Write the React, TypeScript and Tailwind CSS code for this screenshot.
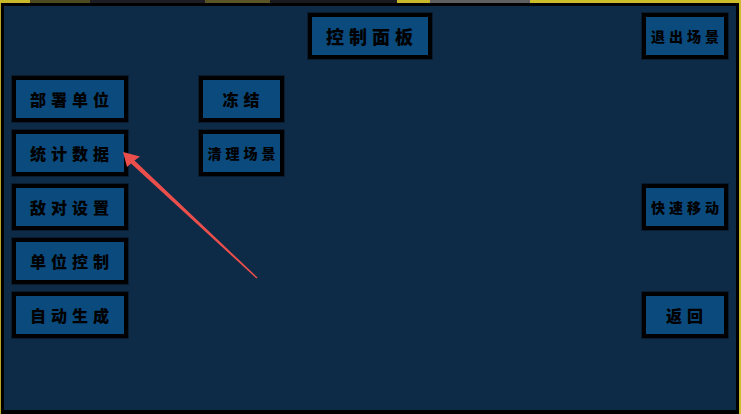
import React from "react";

const font = { fontFamily: '"Noto Sans CJK SC", "Noto Sans", sans-serif' };

type BtnProps = {
  label: string;
  size?: "lg" | "md" | "sm";
  className?: string;
};

const Btn = ({ label, size = "md", className = "" }: BtnProps) => {
  const text =
    size === "lg"
      ? "text-[18px] tracking-[5px]"
      : size === "sm"
      ? "text-[14px] tracking-[4px]"
      : "text-[16px] tracking-[5px]";
  return (
    <div
      className={`h-[46px] flex items-center justify-center border-4 border-black bg-[#0b4a7c] shadow-[0_0_0_1px_#0a1c30] ${className}`}
    >
      <span className={`font-black text-black leading-none pl-[4px] ${text}`}>{label}</span>
    </div>
  );
};

const App = () => {
  return (
    <div className="relative w-[741px] h-[414px] bg-black overflow-hidden" style={font}>
      {/* strip of the scene behind the panel */}
      <div className="flex h-[3px]">
        <div className="w-[30px] bg-[#c9b92a]" />
        <div className="w-[60px] bg-[#4d4a22]" />
        <div className="w-[115px] bg-[#1c1c22]" />
        <div className="w-[65px] bg-[#5a5524]" />
        <div className="w-[127px] bg-[#1a1a1e]" />
        <div className="w-[33px] bg-[#c8b82a]" />
        <div className="w-[100px] bg-[#5f5f5f]" />
        <div className="flex-1 bg-[#cdbd2b]" />
      </div>

      <div className="flex h-[411px]">
        <div className="w-[1px] bg-[#b8a825]" />
        <div className="flex-1 pl-[3px] pr-[3px] pt-[3px] pb-[4px]">
          <div className="h-full bg-[#0d2a47] flex flex-col px-[8px] pt-[7px]">
            <div className="grid grid-cols-[1fr_auto_1fr] items-center">
              <div />
              <Btn label="控制面板" size="lg" className="w-[124px]" />
              <Btn label="退出场景" size="sm" className="w-[86px] justify-self-end" />
            </div>

            <div className="mt-[17px] grid grid-cols-[116px_85px_1fr_86px] gap-x-[71px] gap-y-[8px]">
              <Btn label="部署单位" />
              <Btn label="冻结" />
              <div />
              <div />

              <Btn label="统计数据" />
              <Btn label="清理场景" size="sm" />
              <div />
              <div />

              <Btn label="敌对设置" />
              <div />
              <div />
              <Btn label="快速移动" size="sm" />

              <Btn label="单位控制" />
              <div />
              <div />
              <div />

              <Btn label="自动生成" />
              <div />
              <div />
              <Btn label="返回" />
            </div>
          </div>
        </div>
        <div className="w-[2px] bg-[#cdbd2b]" />
      </div>

      {/* annotation arrow */}
      <svg className="absolute inset-0 pointer-events-none" width="741" height="414" viewBox="0 0 741 414">
        <path
          d="M123 152 L140 156.5 L134.5 160.5 L257.5 277.5 L256.5 278.5 L131 163.5 L127 167 Z"
          fill="#ea4f4c"
        />
      </svg>
    </div>
  );
};

export default App;
